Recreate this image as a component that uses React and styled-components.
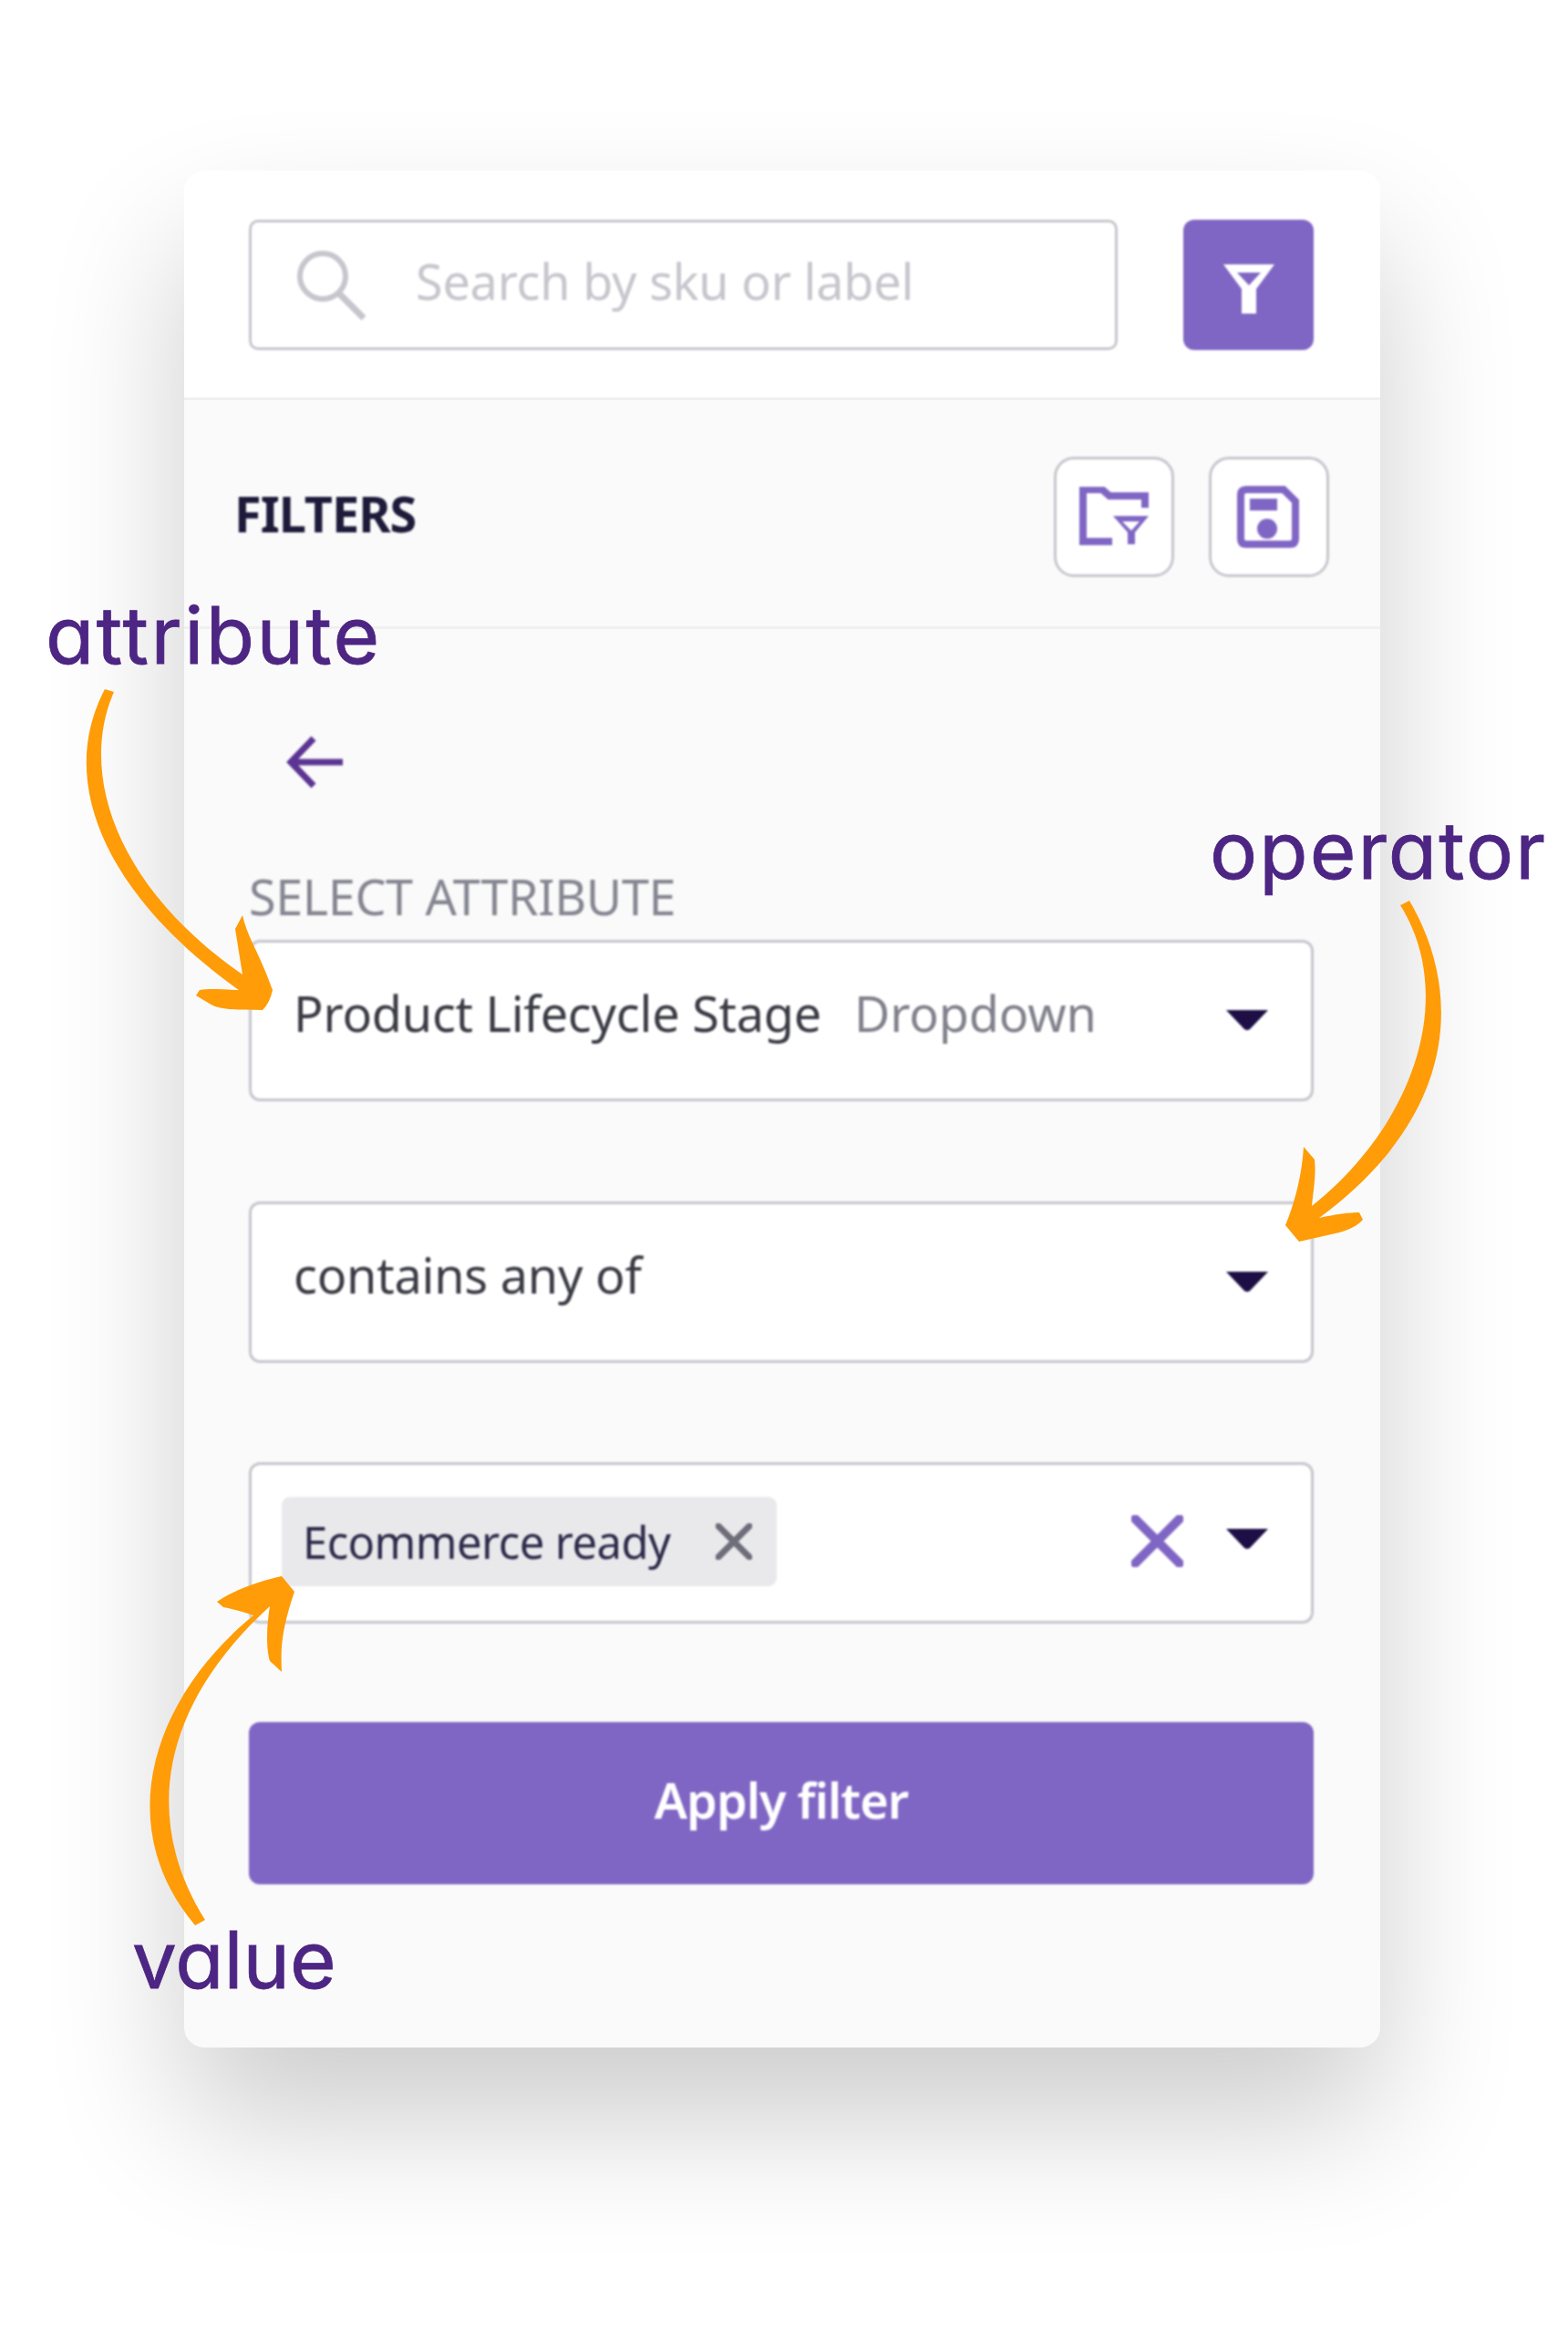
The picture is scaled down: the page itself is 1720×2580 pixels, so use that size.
import React from 'react';
import styled, { createGlobalStyle, css } from 'styled-components';

const GlobalStyle = createGlobalStyle`
    html, body {
        margin: 0;
        padding: 0;
        background: #fff;
    }
`;

const soft = css`
    filter: blur(1.1px);
`;

const UI_FONT = `"Noto Sans", "Open Sans", sans-serif`;

function SearchIcon() {
    return (
        <IconSvg width="78" height="78" viewBox="0 0 78 78">
            <circle cx="29" cy="29" r="25" fill="none" stroke="#c6c6cd" strokeWidth="6" />
            <path d="M47 48 L74 75" fill="none" stroke="#c6c6cd" strokeWidth="7" />
        </IconSvg>
    );
}

function FunnelIcon() {
    return (
        <IconSvg width="56" height="55" viewBox="0 0 56 55">
            <path fillRule="evenodd" fill="#fff" d="M0 0 H56 L36 27 V54 H20 V27 Z M15 9 L28 23 L41 9 Z" />
        </IconSvg>
    );
}

function FolderFilterIcon() {
    return (
        <IconSvg width="76" height="66" viewBox="0 0 76 66">
            <path d="M72 23 V10 H33 L25 3 H4 V60 H36" fill="none" stroke="#8066c4" strokeWidth="8" />
            <path fillRule="evenodd" fill="#8066c4" d="M37 32 H76 L61 50 V63 H53 V50 Z M47 38 L57 48 L66 38 Z" />
        </IconSvg>
    );
}

function SaveIcon() {
    return (
        <SaveSvg width="68" height="68" viewBox="0 0 68 68">
            <path d="M4 10 Q4 4 10 4 H51 L64 17 V58 Q64 64 58 64 H10 Q4 64 4 58 Z" fill="none" stroke="#8066c4" strokeWidth="8" />
            <path d="M14 14 H44 V27 H14 Z" fill="#8066c4" />
            <circle cx="33" cy="47" r="11" fill="#8066c4" />
        </SaveSvg>
    );
}

function BackIcon() {
    return (
        <IconSvg width="62" height="58" viewBox="0 0 62 58">
            <path d="M30 3 L5 29 L30 55 M5 29 H62" fill="none" stroke="#5c3493" strokeWidth="7" />
        </IconSvg>
    );
}

function Caret() {
    return (
        <IconSvg width="46" height="24" viewBox="0 0 46 24">
            <path d="M0 1 H46 L26 22 Q23 24 20 22 Z" fill="#1d0f45" />
        </IconSvg>
    );
}

function CrossIcon({ size, color, weight }) {
    return (
        <IconSvg width={size} height={size} viewBox="0 0 40 40" preserveAspectRatio="none">
            <path d="M3 3 L37 37 M37 3 L3 37" fill="none" stroke={color} strokeWidth={weight} strokeLinecap="round" />
        </IconSvg>
    );
}

function Arrows() {
    return (
        <ArrowLayer viewBox="0 0 1720 2580">
            <path d="M125 759 C85 850 130 975 266 1069 L258 1019 L266 1004 C272 1030 285 1046 299 1086 Q296 1100 288 1108 C265 1108 240 1108 230 1101 L215 1092 L219 1086 C232 1084 250 1086 262 1086 C120 985 60 860 115 756 Z" />
            <path d="M1546 988 C1606 1090 1598 1225 1447 1336 C1465 1332 1480 1330 1491 1330 L1495 1338 C1485 1348 1475 1350 1469 1352 L1425 1362 L1410 1344 C1420 1320 1428 1290 1430 1258 L1442 1272 C1444 1290 1440 1310 1439 1323 C1555 1230 1597 1090 1536 993 Z" />
            <path d="M225 2106 C158 2000 172 1875 296 1762 C292 1785 292 1810 296 1822 L309 1834 C308 1810 308 1790 323 1746 L309 1729 C290 1733 260 1742 238 1757 L245 1763 C255 1765 268 1768 278 1772 C170 1860 120 2000 214 2112 Z" />
        </ArrowLayer>
    );
}

export default function App() {
    return (
        <Page>
            <GlobalStyle />
            <Panel>
                <SearchSection>
                    <SearchBox>
                        <SearchIcon />
                        <SearchPlaceholder>Search by sku or label</SearchPlaceholder>
                    </SearchBox>
                    <FilterButton><FunnelIcon /></FilterButton>
                </SearchSection>
                <FiltersHeader>
                    <FiltersTitle>FILTERS</FiltersTitle>
                    <HeaderActions>
                        <IconButton><FolderFilterIcon /></IconButton>
                        <IconButton><SaveIcon /></IconButton>
                    </HeaderActions>
                </FiltersHeader>
                <FilterBody>
                    <BackButton><BackIcon /></BackButton>
                    <FieldLabel>SELECT ATTRIBUTE</FieldLabel>
                    <SelectBox>
                        <SelectValue>Product Lifecycle Stage</SelectValue>
                        <SelectHint>Dropdown</SelectHint>
                        <CaretSlot><Caret /></CaretSlot>
                    </SelectBox>
                    <SelectBox $gap={110}>
                        <SelectValue>contains any of</SelectValue>
                        <CaretSlot><Caret /></CaretSlot>
                    </SelectBox>
                    <TagSelectBox>
                        <Tag>
                            <TagText>Ecommerce ready</TagText>
                            <CrossIcon size={40} color="#6e6d7a" weight={7} />
                        </Tag>
                        <ClearSlot><CrossIcon size={57} color="#8066c4" weight={7} /></ClearSlot>
                        <TagCaretSlot><Caret /></TagCaretSlot>
                    </TagSelectBox>
                    <ApplyButton><ApplyLabel>Apply filter</ApplyLabel></ApplyButton>
                </FilterBody>
            </Panel>
            <Arrows />
            <Annotation $left={50} $top={653} $tracking={2.5}>attribute</Annotation>
            <Annotation $left={1327} $top={889} $tracking={2.1}>operator</Annotation>
            <Annotation $left={145} $top={2106} $tracking={0}>value</Annotation>
        </Page>
    );
}

const Page = styled.div`
    position: relative;
    width: 1720px;
    height: 2580px;
    box-sizing: border-box;
    padding: 187px 0 0 202px;
    overflow: hidden;
    background: #fff;
    font-family: ${UI_FONT};
`;

const Panel = styled.div`
    width: 1312px;
    height: 2059px;
    display: flex;
    flex-direction: column;
    background: #fafafa;
    border-radius: 22px;
    box-shadow: 0 80px 150px rgba(0, 0, 0, 0.2);
`;

const IconSvg = styled.svg`
    display: block;
    flex: none;
`;

const SaveSvg = styled(IconSvg)`
    margin-right: 3px;
`;

const SearchSection = styled.div`
    height: 252px;
    box-sizing: border-box;
    padding: 54px 73px 0 71px;
    display: flex;
    align-items: flex-start;
    gap: 72px;
    background: #fff;
    border-radius: 22px 22px 0 0;
    border-bottom: 3px solid #f0f0f0;
`;

const SearchBox = styled.div`
    ${soft}
    flex: 1;
    height: 143px;
    box-sizing: border-box;
    display: flex;
    align-items: center;
    gap: 53px;
    padding: 0 0 0 49px;
    background: #fff;
    border: 3px solid #c6c6cd;
    border-radius: 10px;
`;

const SearchPlaceholder = styled.span`
    margin-top: -10px;
    font-size: 54px;
    letter-spacing: -0.25px;
    color: #c6c6cd;
    white-space: nowrap;
`;

const FilterButton = styled.div`
    ${soft}
    width: 143px;
    height: 143px;
    flex: none;
    display: flex;
    align-items: center;
    justify-content: center;
    background: #8066c4;
    border-radius: 12px;

    svg {
        margin-top: 9px;
    }
`;

const FiltersHeader = styled.div`
    height: 251px;
    box-sizing: border-box;
    padding: 0 56px 0 55px;
    display: flex;
    align-items: center;
    justify-content: space-between;
    border-bottom: 3px solid #f0f0f0;
`;

const FiltersTitle = styled.div`
    ${soft}
    font-size: 54px;
    font-weight: 700;
    letter-spacing: -1px;
    color: #1d1a3a;
`;

const HeaderActions = styled.div`
    display: flex;
    gap: 38px;
    margin-top: 8px;
`;

const IconButton = styled.div`
    ${soft}
    width: 132px;
    height: 132px;
    box-sizing: border-box;
    display: flex;
    align-items: center;
    justify-content: center;
    background: #fff;
    border: 3px solid #c6c6cd;
    border-radius: 22px;
`;

const FilterBody = styled.div`
    flex: 1;
    padding: 0 73px 0 71px;
    display: flex;
    flex-direction: column;
`;

const BackButton = styled.div`
    ${soft}
    margin: 117px 0 0 41px;
    height: 58px;
`;

const FieldLabel = styled.div`
    ${soft}
    margin-top: 81px;
    height: 85px;
    font-size: 54px;
    line-height: 74px;
    letter-spacing: -0.4px;
    color: #868692;
    white-space: nowrap;
`;

const SelectBox = styled.div`
    ${soft}
    height: 177px;
    flex: none;
    box-sizing: border-box;
    margin-top: ${(props) => props.$gap || 0}px;
    padding: 0 47px 18px 46px;
    display: flex;
    align-items: center;
    background: #fff;
    border: 3px solid #c6c6cd;
    border-radius: 12px;
`;

const TagSelectBox = styled(SelectBox)`
    margin-top: 109px;
    padding: 0 47px 4px 33px;
`;

const SelectValue = styled.span`
    font-size: 54px;
    letter-spacing: -0.25px;
    color: #3b3b45;
    white-space: nowrap;
`;

const SelectHint = styled.span`
    margin-left: 36px;
    font-size: 54px;
    letter-spacing: -0.2px;
    color: #81818c;
    white-space: nowrap;
`;

const CaretSlot = styled.div`
    margin-left: auto;
    padding-top: 16px;
`;

const TagCaretSlot = styled.div`
    margin-left: 47px;
    margin-bottom: 6px;
`;

const Tag = styled.div`
    height: 98px;
    box-sizing: border-box;
    padding: 0 27px 0 23px;
    display: flex;
    align-items: center;
    gap: 50px;
    background: #e9e9eb;
    border-radius: 9px;
`;

const TagText = styled.span`
    font-size: 49px;
    letter-spacing: -0.6px;
    color: #2d2a4a;
    white-space: nowrap;
`;

const ClearSlot = styled.div`
    margin-left: auto;
`;

const ApplyButton = styled.div`
    ${soft}
    margin-top: 108px;
    height: 178px;
    flex: none;
    display: flex;
    align-items: center;
    justify-content: center;
    background: #8066c4;
    border-radius: 12px;
`;

const ApplyLabel = styled.span`
    margin-top: -8px;
    font-size: 54px;
    font-weight: 600;
    letter-spacing: -1px;
    color: #fff;
`;

const ArrowLayer = styled.svg`
    position: absolute;
    left: 0;
    top: 0;
    width: 1720px;
    height: 2580px;
    fill: #ff9c07;
    pointer-events: none;
`;

const Annotation = styled.span`
    position: absolute;
    left: ${(props) => props.$left}px;
    top: ${(props) => props.$top}px;
    font-family: Inter, "Noto Sans", sans-serif;
    font-feature-settings: "cv11";
    font-size: 87px;
    font-weight: 400;
    letter-spacing: ${(props) => props.$tracking}px;
    line-height: 1;
    color: #4d2583;
    white-space: nowrap;
    -webkit-text-stroke: 0.8px #4d2583;
`;
